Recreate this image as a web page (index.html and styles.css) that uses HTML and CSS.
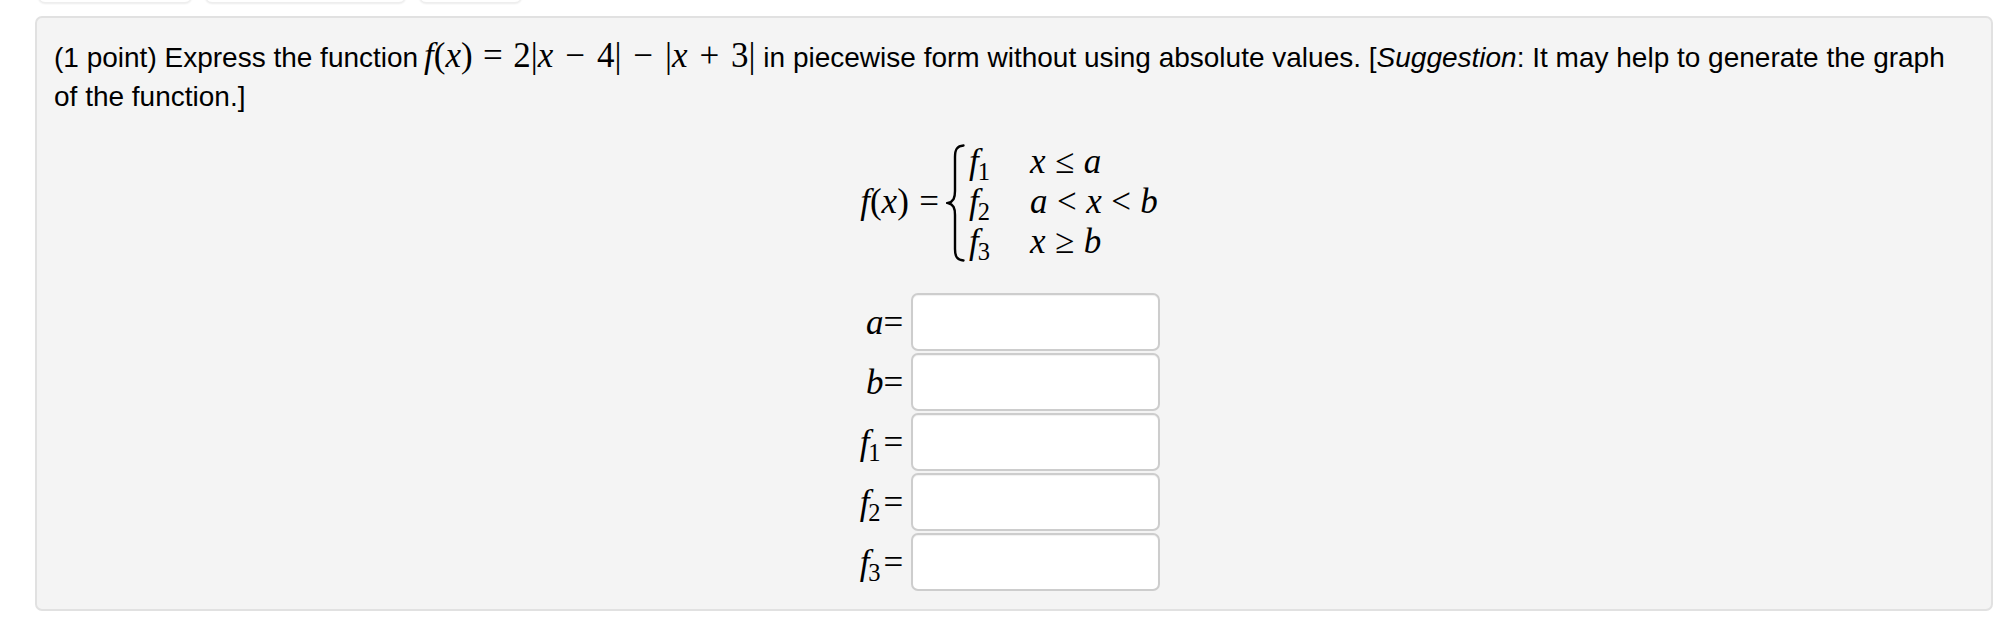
FILE: index.html
```html
<!DOCTYPE html>
<html lang="en">
<head>
<meta charset="utf-8">
<title>Piecewise form</title>
<link rel="stylesheet" href="styles.css">
</head>
<body>
<div class="tabs">
  <span class="tab tab1"></span>
  <span class="tab tab2"></span>
  <span class="tab tab3"></span>
</div>
<div class="problem">
  <p class="statement">(1 point) Express the function <span class="m"><i>f</i>(<i>x</i>)<span class="rel">=</span>2|<i>x</i><span class="bin">−</span>4|<span class="bin">−</span>|<i>x</i><span class="bin">+</span>3|</span> in piecewise form without using absolute values. [<em>Suggestion</em>: It may help to generate the graph of the function.]</p>

  <div class="display">
    <span class="m lhs"><i>f</i>(<i>x</i>)<span class="rel">=</span></span>
    <svg class="brace" width="20" height="118" viewBox="0 0 20 118" aria-hidden="true">
      <path d="M17.5,1.5 C11,2 9,5.5 9,13 L9,47 C9,54 7.5,57.5 2,59 C7.5,60.5 9,64 9,71 L9,105 C9,112.5 11,116 17.5,116.5" fill="none" stroke="#000" stroke-width="2.4" stroke-linecap="round"/>
    </svg>
    <div class="cases">
      <span class="m"><i>f</i><sub>1</sub></span>
      <span class="m"><i>x</i><span class="rel">≤</span><i>a</i></span>
      <span class="m"><i>f</i><sub>2</sub></span>
      <span class="m"><i>a</i><span class="rel">&lt;</span><i>x</i><span class="rel">&lt;</span><i>b</i></span>
      <span class="m"><i>f</i><sub>3</sub></span>
      <span class="m"><i>x</i><span class="rel">≥</span><i>b</i></span>
    </div>
  </div>

  <div class="answers">
    <label class="m lbl" for="ans-a"><i>a</i>=</label>
    <input class="ans" id="ans-a" type="text">
    <label class="m lbl" for="ans-b"><i>b</i>=</label>
    <input class="ans" id="ans-b" type="text">
    <label class="m lbl" for="ans-f1"><i>f</i><sub>1</sub><span class="eq">=</span></label>
    <input class="ans" id="ans-f1" type="text">
    <label class="m lbl" for="ans-f2"><i>f</i><sub>2</sub><span class="eq">=</span></label>
    <input class="ans" id="ans-f2" type="text">
    <label class="m lbl" for="ans-f3"><i>f</i><sub>3</sub><span class="eq">=</span></label>
    <input class="ans" id="ans-f3" type="text">
  </div>
</div>
</body>
</html>
```

FILE: styles.css
```css
* { box-sizing: border-box; }

body {
  margin: 0;
  background: #ffffff;
  color: #000000;
  font-family: "Liberation Sans", Arial, Helvetica, sans-serif;
}

/* faint bottoms of the navigation buttons above the problem */
.tabs {
  display: flex;
  gap: 13px;
  height: 5px;
  padding-left: 38px;
  overflow: hidden;
}
.tab {
  display: block;
  height: 14px;
  margin-top: -11px;
  background: #ffffff;
  border: 1px solid #eeeeee;
  border-radius: 7px;
  box-shadow: 0 1px 2px rgba(0, 0, 0, 0.08);
}
.tab1 { width: 154px; }
.tab2 { width: 201px; }
.tab3 { width: 103px; }

.problem {
  margin: 11px 23px 0 35px;
  padding: 20px 25px 18px 17px;
  background: #f4f4f4;
  border: 2px solid #e1e1e1;
  border-radius: 7px;
}

.statement {
  margin: 0;
  font-size: 28px;
  line-height: 39px;
}

/* math typesetting */
.m {
  font-family: "Liberation Serif", "Times New Roman", serif;
  font-size: 35px;
  white-space: nowrap;
}
.statement .m { line-height: 1; margin-left: -2px; }
.m i { font-style: italic; }
.m sub {
  font-size: 0.7em;
  line-height: 0;
  vertical-align: -0.3em;
  margin-left: -1px;
}
.rel { margin: 0 0.3em; }
.bin { margin: 0 0.34em; }

.display {
  display: flex;
  justify-content: center;
  align-items: center;
  margin-top: 26px;
  padding-right: 2px;
}
.lhs .rel { margin-right: 0.2em; }
.brace {
  display: block;
  margin-right: 3px;
  margin-top: 1px;
}
.cases {
  display: grid;
  grid-template-columns: auto auto;
  column-gap: 40px;
}
.cases .m {
  line-height: 40px;
}
.cases .rel { margin: 0 0.27em; }

.answers {
  display: grid;
  grid-template-columns: auto 249px;
  justify-content: center;
  align-items: center;
  column-gap: 8px;
  row-gap: 2px;
  margin-top: 31px;
}
.lbl {
  justify-self: end;
  line-height: 1;
}
.lbl .eq { margin-left: 3px; }
.ans {
  display: block;
  width: 249px;
  height: 58px;
  background: #ffffff;
  border: 2px solid #cdcdcd;
  border-radius: 7px;
  box-shadow: inset 0 1px 1px rgba(0, 0, 0, 0.06);
  font: inherit;
  font-size: 24px;
  padding: 4px 10px;
}
```
